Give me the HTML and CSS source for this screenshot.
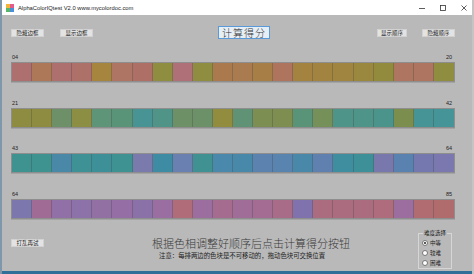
FILE: index.html
```html
<!DOCTYPE html>
<html>
<head>
<meta charset="utf-8">
<link rel="stylesheet" href="styles.css">
</head>
<body>
<div class="window">
  <div class="titlebar">
    <svg class="appicon" width="8" height="8" viewBox="0 0 8 8">
      <rect x="0" y="0" width="4" height="4" fill="#f2b53a"/>
      <rect x="4" y="0" width="4" height="4" fill="#e45b8c"/>
      <rect x="0" y="4" width="4" height="4" fill="#56b66a"/>
      <rect x="4" y="4" width="4" height="4" fill="#4a8fd8"/>
    </svg>
    <span class="title">AlphaColorIQtest V2.0 www.mycolordoc.com</span>
    <div class="controls">
      <svg width="8" height="8" viewBox="0 0 8 8"><line x1="1" y1="4.5" x2="7" y2="4.5" stroke="#333" stroke-width="0.8"/></svg>
      <svg width="8" height="8" viewBox="0 0 8 8"><rect x="1.5" y="1.5" width="5" height="5" fill="none" stroke="#333" stroke-width="0.8"/></svg>
      <svg width="8" height="8" viewBox="0 0 8 8"><path d="M1.5 1.5 L6.5 6.5 M6.5 1.5 L1.5 6.5" stroke="#333" stroke-width="0.8"/></svg>
    </div>
  </div>
  <div class="main">
    <div class="toolbar">
      <button class="btn b1">隐藏边框</button>
      <button class="btn b2">显示边框</button>
      <button class="btn score">计算得分</button>
      <button class="btn b3">显示顺序</button>
      <button class="btn b4">隐藏顺序</button>
    </div>
    <div class="rows">
      <div class="row">
        <div class="labels"><span>04</span><span>20</span></div>
        <div class="strip">
          <i style="background:#ae6f6f"></i><i style="background:#ad7857"></i><i style="background:#ae6f6f"></i><i style="background:#ae716a"></i><i style="background:#a6853f"></i><i style="background:#ae7464"></i><i style="background:#ae7066"></i><i style="background:#8f8d40"></i><i style="background:#b07078"></i><i style="background:#8f8d40"></i><i style="background:#aa7a4e"></i><i style="background:#aa7b4e"></i><i style="background:#a67e46"></i><i style="background:#ae745e"></i><i style="background:#a48340"></i><i style="background:#a28440"></i><i style="background:#a08540"></i><i style="background:#9a883e"></i><i style="background:#928b3e"></i><i style="background:#ae7660"></i><i style="background:#ae7660"></i><i style="background:#8f8d40"></i>
        </div>
      </div>
      <div class="row">
        <div class="labels"><span>21</span><span>42</span></div>
        <div class="strip">
          <i style="background:#8e8c40"></i><i style="background:#8e8c40"></i><i style="background:#6e9068"></i><i style="background:#8c8e44"></i><i style="background:#5e9478"></i><i style="background:#5a9478"></i><i style="background:#489494"></i><i style="background:#509488"></i><i style="background:#6e9066"></i><i style="background:#6c9068"></i><i style="background:#928c3e"></i><i style="background:#609276"></i><i style="background:#7c8e52"></i><i style="background:#7e8e50"></i><i style="background:#5a9478"></i><i style="background:#76905a"></i><i style="background:#4e9488"></i><i style="background:#4e9488"></i><i style="background:#4a948c"></i><i style="background:#7c8e4e"></i><i style="background:#469496"></i><i style="background:#449498"></i>
        </div>
      </div>
      <div class="row">
        <div class="labels"><span>43</span><span>64</span></div>
        <div class="strip">
          <i style="background:#3e9290"></i><i style="background:#3e9290"></i><i style="background:#4a88a8"></i><i style="background:#3e9296"></i><i style="background:#3e9098"></i><i style="background:#3e9292"></i><i style="background:#7a7aac"></i><i style="background:#3e8ca4"></i><i style="background:#6a80b0"></i><i style="background:#409292"></i><i style="background:#4a88ac"></i><i style="background:#4888a8"></i><i style="background:#5c82b0"></i><i style="background:#5a84b0"></i><i style="background:#4a88aa"></i><i style="background:#6080b0"></i><i style="background:#3e8ea0"></i><i style="background:#3e9098"></i><i style="background:#7878ac"></i><i style="background:#5a82b0"></i><i style="background:#7478ae"></i><i style="background:#7a78ae"></i>
        </div>
      </div>
      <div class="row">
        <div class="labels"><span>64</span><span>85</span></div>
        <div class="strip">
          <i style="background:#7c78ae"></i><i style="background:#a06c96"></i><i style="background:#9070a6"></i><i style="background:#8c72a8"></i><i style="background:#9270a4"></i><i style="background:#946ea4"></i><i style="background:#8a72a8"></i><i style="background:#9a6ea0"></i><i style="background:#b06c78"></i><i style="background:#9c6ea0"></i><i style="background:#a66c90"></i><i style="background:#a06c98"></i><i style="background:#a46c92"></i><i style="background:#a86c88"></i><i style="background:#8072ac"></i><i style="background:#ac6c80"></i><i style="background:#ac6c80"></i><i style="background:#ac6c80"></i><i style="background:#ae6c7c"></i><i style="background:#9c6ea0"></i><i style="background:#b06c70"></i><i style="background:#b06c6c"></i>
        </div>
      </div>
    </div>
    <div class="bottom">
      <button class="btn shuffle">打乱再试</button>
      <div class="center">
        <div class="big">根据色相调整好顺序后点击计算得分按钮</div>
        <div class="note">注意：每排两边的色块是不可移动的，拖动色块可交换位置</div>
      </div>
      <fieldset class="group">
        <legend>难度选择</legend>
        <label class="radio"><span class="dot on"></span>中等</label>
        <label class="radio"><span class="dot"></span>较难</label>
        <label class="radio"><span class="dot"></span>困难</label>
      </fieldset>
    </div>
  </div>
  <div class="taskbar"></div>
</div>
</body>
</html>
```
FILE: styles.css
```css
* { box-sizing: border-box; }
html, body { margin: 0; padding: 0; background: #b9b9b9; }
body { font-family: "Noto Sans CJK SC", "Liberation Sans", sans-serif; }

.window {
  width: 474px;
  height: 274px;
  display: flex;
  flex-direction: column;
  background: #b9b9b9;
  border-left: 2px solid #7f97ab;
  border-right: 2px solid #c4c4c4;
  overflow: hidden;
}

.titlebar {
  height: 15px;
  background: #ffffff;
  display: flex;
  align-items: center;
  padding-left: 4px;
  flex: none;
}
.appicon { flex: none; }
.title {
  margin-left: 4px;
  font-family: "Liberation Sans", sans-serif;
  font-size: 5.8px;
  color: #222;
  white-space: nowrap;
}
.controls {
  margin-left: auto;
  display: flex;
  gap: 13px;
  padding-right: 4px;
}

.main {
  flex: 1;
  padding-left: 9px;
  display: flex;
  flex-direction: column;
}

.btn {
  margin: 0;
  padding: 0;
  height: 8px;
  border: 1px solid #d2d2d2;
  background: #e3e3e3;
  font-family: "Noto Sans CJK SC", sans-serif;
  font-size: 5.5px;
  line-height: 6px;
  color: #222;
  flex: none;
}

.toolbar {
  margin-top: 11px;
  height: 13px;
  display: flex;
  align-items: center;
}
.b1 { width: 33px; }
.b2 { width: 33px; margin-left: 16px; }
.score {
  width: 52px;
  height: 13px;
  margin-left: 125px;
  border: 1px solid #5a9ad8;
  background: #e6eef6;
  font-size: 10px;
  line-height: 11px;
  font-weight: 300;
  color: #333;
  letter-spacing: 1px;
}
.b3 { width: 30px; margin-left: 107px; }
.b4 { width: 33px; margin-left: 15px; }

.rows {
  margin-top: 14px;
  display: flex;
  flex-direction: column;
  gap: 16.7px;
}
.row { width: 444px; }
.labels {
  height: 9px;
  display: flex;
  justify-content: space-between;
  align-items: flex-end;
  padding: 0 3px 2px 1px;
  font-family: "Liberation Sans", sans-serif;
  font-size: 5.5px;
  line-height: 5px;
  color: #222;
}
.strip {
  height: 20px;
  display: grid;
  grid-template-columns: repeat(22, 1fr);
  border: 1px solid #8e8e8e;
  box-shadow: 0 1px 0 #a4a4a4;
}
.strip i {
  display: block;
  border-right: 1px solid rgba(60, 60, 60, 0.28);
}
.strip i:last-child { border-right: none; }

.bottom {
  margin-top: 13px;
  display: flex;
  align-items: flex-start;
}
.shuffle {
  width: 33px;
  margin-top: 7px;
}
.center {
  margin-left: 108px;
  width: 200px;
  display: flex;
  flex-direction: column;
  align-items: flex-start;
}
.big {
  margin-top: 4px;
  font-family: "Noto Sans CJK SC", serif;
  font-size: 11px;
  line-height: 14px;
  font-weight: 300;
  color: #3a3a3a;
  white-space: nowrap;
}
.note {
  margin-top: 2px;
  margin-left: 7px;
  font-size: 6.4px;
  line-height: 8px;
  color: #222;
  white-space: nowrap;
}

.group {
  margin: -1px 0 0 66px;
  padding: 3px 0 0 3px;
  width: 34px;
  height: 38px;
  border: 1px solid #d6d6d6;
  display: flex;
  flex-direction: column;
  gap: 2px;
}
.group legend {
  padding: 0 1px;
  margin-left: 1px;
  font-size: 5.5px;
  line-height: 5px;
  color: #222;
}
.radio {
  display: flex;
  align-items: center;
  gap: 2px;
  font-size: 5.5px;
  line-height: 8px;
  color: #222;
}
.dot {
  width: 6px;
  height: 6px;
  border-radius: 50%;
  background: #fff;
  border: 1px solid #777;
  display: flex;
  align-items: center;
  justify-content: center;
}
.dot.on::after {
  content: "";
  width: 2px;
  height: 2px;
  border-radius: 50%;
  background: #222;
}

.taskbar {
  height: 3px;
  flex: none;
  background: #2f6f98;
  margin-left: -2px;
  margin-right: -2px;
}
```
